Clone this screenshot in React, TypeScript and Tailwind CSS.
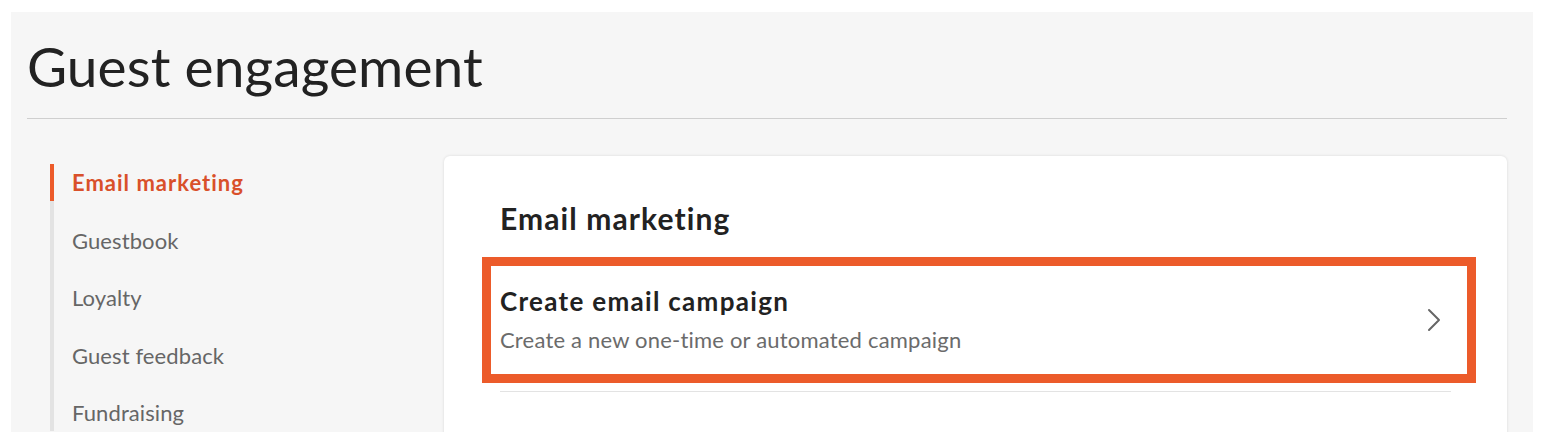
import { ChevronRight } from "lucide-react";

const navItems = [
  { label: "Email marketing", active: true },
  { label: "Guestbook" },
  { label: "Loyalty" },
  { label: "Guest feedback" },
  { label: "Fundraising" },
];

function SideNav() {
  return (
    <nav className="w-[394px] shrink-0 pt-[8px]">
      <ul className="border-l-[4px] border-[#e3e3e3]">
        {navItems.map((item) => (
          <li
            key={item.label}
            className={
              item.active
                ? "-ml-[4px] flex h-[37px] items-center border-l-[4px] border-[#ec5b2a] pl-[18px] text-[22px] font-bold tracking-[1px] text-[#d9502a]"
                : "flex h-[37px] items-center pl-[18px] text-[22px] tracking-[0.1px] text-[#666666]"
            }
            style={{ marginBottom: 20.5 }}
          >
            {item.label}
          </li>
        ))}
      </ul>
    </nav>
  );
}

export default function App() {
  return (
    <div className="h-[432px] overflow-hidden bg-white pl-[11px] pr-[25px] pt-[12px] font-['Lato','Open_Sans',sans-serif]">
      <div className="h-full bg-[#f6f6f6] pl-[16px] pr-[26px]">
        <h1 className="flex h-[106px] items-center pt-[2px] text-[55px] leading-none tracking-[0.1px] text-[#222222]">
          Guest engagement
        </h1>
        <div className="border-t border-[#cfcfcf]" />

        <div className="flex pt-[37px]">
          <div className="pl-[23px]">
            <SideNav />
          </div>
          <section className="flex-1 rounded-[6px] bg-white px-[56px] pt-[44px] shadow-[0_0_3px_rgba(0,0,0,0.12)]">
            <h2 className="text-[30px] font-bold leading-[36px] tracking-[1.1px] text-[#222222]">
              Email marketing
            </h2>
            <div className="mt-[21px] -ml-[18px] -mr-[25px] flex h-[126px] items-center justify-between border-[9px] border-[#ec5b2a] pl-[9px] pr-[13px]">
              <div className="pb-[2px]">
                <div className="text-[26px] font-bold leading-[32px] tracking-[1.3px] text-[#222222]">
                  Create email campaign
                </div>
                <div className="mt-[10px] text-[22px] leading-[26px] tracking-[0.2px] text-[#6b6b6b]">
                  Create a new one-time or automated campaign
                </div>
              </div>
              <ChevronRight className="h-[40px] w-[40px] text-[#666666]" strokeWidth={1.2} />
            </div>
            <div className="mt-[8px] border-t border-[#e3e3e3]" />
          </section>
        </div>
      </div>
    </div>
  );
}
